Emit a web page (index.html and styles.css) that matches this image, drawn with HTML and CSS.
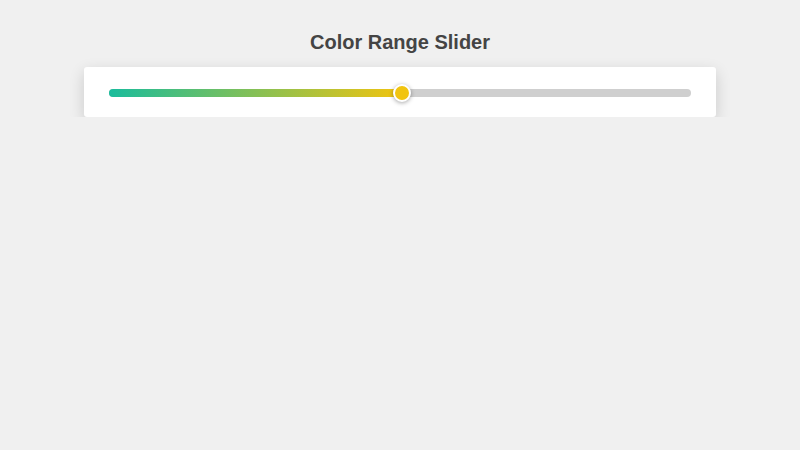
FILE: index.html
```html
<!DOCTYPE html>
<html lang="en">
<head>
<meta charset="utf-8">
<title>Color Range Slider</title>
<link rel="stylesheet" href="styles.css">
</head>
<body>
  <h1 class="title">Color Range Slider</h1>
  <div class="card">
    <div class="track">
      <div class="fill" style="width: 50.3%"></div>
      <div class="thumb" style="left: 50.3%"></div>
    </div>
  </div>
</body>
</html>
```
FILE: styles.css
```css
html, body {
  margin: 0;
  padding: 0;
}
body {
  background: #f0f0f0;
  font-family: "Liberation Sans", Arial, sans-serif;
  padding-top: 31px;
}
.title {
  margin: 0 0 13px;
  font-size: 20px;
  line-height: 23px;
  font-weight: bold;
  color: #444;
  text-align: center;
}
.card {
  margin: 0 84px;
  background: #fff;
  border-radius: 3px;
  padding: 22px 25px 20px;
  box-shadow: 0 5px 15px rgba(0, 0, 0, 0.16);
}
.track {
  position: relative;
  height: 8px;
  border-radius: 4px;
  background: #cfcfcf;
}
.fill {
  height: 100%;
  border-radius: 4px;
  background: linear-gradient(to right, #1abc9c, #f1c40f);
}
.thumb {
  position: absolute;
  top: 50%;
  width: 14px;
  height: 14px;
  margin: -9px 0 0 -9px;
  border: 2px solid #fff;
  border-radius: 50%;
  background: #f1c40f;
  box-shadow: 0 1px 4px rgba(0, 0, 0, 0.35);
}
```
